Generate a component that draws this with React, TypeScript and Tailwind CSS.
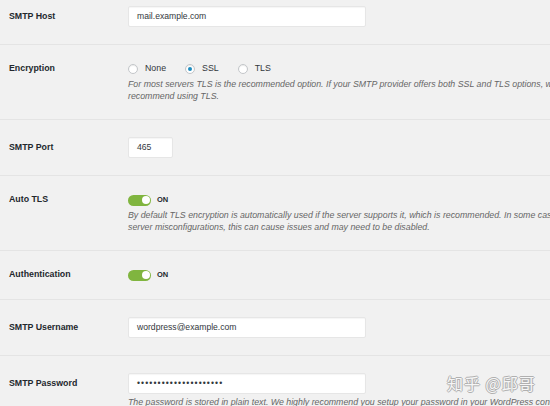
import React from "react";

const font = { fontFamily: '"Liberation Sans", Arial, sans-serif' };

const Row = ({
  label,
  labelH,
  children,
  last = false,
}: {
  label: string;
  labelH: string;
  children: React.ReactNode;
  last?: boolean;
}) => (
  <div
    className={`flex py-[17px] ${last ? "" : "border-b border-[#e4e4e4]"}`}
  >
    <div className="w-[128px] shrink-0 pl-[9px]">
      <div
        className={`flex items-center ${labelH} text-[8.8px] font-bold text-[#23282d]`}
      >
        {label}
      </div>
    </div>
    <div className="flex-1 min-w-0">{children}</div>
  </div>
);

const TextInput = ({
  value,
  width,
  dots = false,
}: {
  value: string;
  width: string;
  dots?: boolean;
}) => (
  <div
    className={`flex h-[21px] ${width} items-center rounded-[2px] border border-[#e6e6e6] bg-white px-[8px] text-[8.6px] text-[#32373c] shadow-[inset_0_1px_1px_rgba(0,0,0,0.04)] ${
      dots ? "tracking-[1.1px]" : ""
    }`}
  >
    {value}
  </div>
);

const Radio = ({ label, checked = false }: { label: string; checked?: boolean }) => (
  <div className="flex items-center gap-[7px]">
    <span className="flex h-[10px] w-[10px] items-center justify-center rounded-full border border-[#c3c6c9] bg-white shadow-[inset_0_1px_1px_rgba(0,0,0,0.08)]">
      {checked && <span className="h-[4px] w-[4px] rounded-full bg-[#1e8cbe]" />}
    </span>
    <span className="text-[8.8px] text-[#32373c]">{label}</span>
  </div>
);

const Toggle = () => (
  <div className="flex h-[14px] items-center gap-[6px]">
    <span className="flex h-[11px] w-[23px] items-center justify-end rounded-full bg-[#80b53f] pr-[1.5px]">
      <span className="h-[8px] w-[8px] rounded-full bg-white" />
    </span>
    <span className="text-[7.5px] font-bold text-[#23282d]">ON</span>
  </div>
);

const Desc = ({ children }: { children: React.ReactNode }) => (
  <p className="mt-[2px] whitespace-nowrap text-[8.8px] italic leading-[12px] text-[#666]">
    {children}
  </p>
);

export default function App() {
  return (
    <div
      className="relative h-[406px] w-[550px] overflow-hidden bg-[#f1f1f1]"
      style={font}
    >
      <div className="-mt-[11px]">
        <Row label="SMTP Host" labelH="h-[21px]">
          <TextInput value="mail.example.com" width="w-[238px]" />
        </Row>

        <Row label="Encryption" labelH="h-[14px]">
          <div className="flex h-[14px] items-center gap-[19px]">
            <Radio label="None" />
            <Radio label="SSL" checked />
            <Radio label="TLS" />
          </div>
          <Desc>
            For most servers TLS is the recommended option. If your SMTP provider
            offers both SSL and TLS options, we
            <br />
            recommend using TLS.
          </Desc>
        </Row>

        <Row label="SMTP Port" labelH="h-[21px]">
          <TextInput value="465" width="w-[45px]" />
        </Row>

        <Row label="Auto TLS" labelH="h-[14px]">
          <Toggle />
          <Desc>
            By default TLS encryption is automatically used if the server supports
            it, which is recommended. In some cases, due to
            <br />
            server misconfigurations, this can cause issues and may need to be
            disabled.
          </Desc>
        </Row>

        <Row label="Authentication" labelH="h-[14px]">
          <Toggle />
        </Row>

        <Row label="SMTP Username" labelH="h-[21px]">
          <TextInput value="wordpress@example.com" width="w-[238px]" />
        </Row>

        <Row label="SMTP Password" labelH="h-[21px]" last>
          <TextInput value="•••••••••••••••••••••" width="w-[238px]" dots />
          <Desc>
            The password is stored in plain text. We highly recommend you setup
            your password in your WordPress configuration file for improved
            security.
          </Desc>
        </Row>
      </div>

      <div
        className="absolute left-[447px] top-[371px] text-[16px] tracking-[1px] text-[#f6f6f6] [text-shadow:1px_0_0_#b0b0b0,-1px_0_0_#b0b0b0,0_1px_0_#b0b0b0,0_-1px_0_#b0b0b0]"
        style={{ fontFamily: '"Noto Sans CJK SC", sans-serif' }}
      >
        知乎 @邱哥
      </div>
    </div>
  );
}
